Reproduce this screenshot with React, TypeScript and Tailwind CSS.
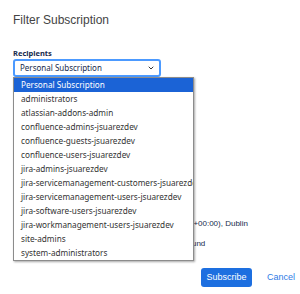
import { ChevronDown } from "lucide-react";

const groups = [
  "Personal Subscription",
  "administrators",
  "atlassian-addons-admin",
  "confluence-admins-jsuarezdev",
  "confluence-guests-jsuarezdev",
  "confluence-users-jsuarezdev",
  "jira-admins-jsuarezdev",
  "jira-servicemanagement-customers-jsuarezdev",
  "jira-servicemanagement-users-jsuarezdev",
  "jira-software-users-jsuarezdev",
  "jira-workmanagement-users-jsuarezdev",
  "site-admins",
  "system-administrators",
];

export default function App() {
  return (
    <div className="w-[300px] h-[294px] bg-white overflow-hidden pl-[13px] pt-[13px] font-['Liberation_Sans',Arial,sans-serif]">
      <h2 className="text-[12px] leading-[14px] text-[#444444]">Filter Subscription</h2>

      <div className="mt-[21px] font-['Noto_Sans',sans-serif]">
        <label className="block text-[7.5px] leading-[10px] font-bold text-[#172b4d]">Recipients</label>
        <div className="relative mt-[1px] w-[148px]">
          <div className="h-[18px] flex items-center justify-between border-2 border-[#4c9aff] rounded-[3px] pl-[5px] pr-[4px] bg-white">
            <span className="text-[8px] text-[#172b4d]">Personal Subscription</span>
            <ChevronDown className="w-[8px] h-[8px] text-[#333333]" strokeWidth={3} />
          </div>

          {/* native select list opened over the form */}
          <ul className="absolute left-0 top-full z-10 w-[181px] bg-white border border-[#8c8c8c] shadow-[1px_1px_2px_rgba(0,0,0,0.35)]">
            {groups.map((g, i) => (
              <li
                key={g}
                className={
                  "h-[14px] flex items-center pl-[7px] text-[8.2px] whitespace-nowrap overflow-hidden " +
                  (i === 0 ? "bg-[#1b63d6] text-white" : "text-[#333333]")
                }
              >
                {g}
              </li>
            ))}
          </ul>
        </div>
      </div>

      <div className="mt-[141px] text-[#172b4d] text-[8px]">
        <div className="flex items-center h-[12px] pl-[103px]">
          <span>Europe/London (GMT+00:00), Dublin</span>
        </div>
        <div className="mt-[8px] flex items-center h-[12px] gap-[4px] pl-[9px]">
          <span className="w-[9px] h-[9px] border border-[#8c8c8c] rounded-[2px]" />
          <span>Email this filter even if there are no issues found</span>
        </div>
      </div>

      <div className="mt-[18px] flex items-center pl-[188px] gap-[15px]">
        <button className="h-[19px] w-[51px] rounded-[3px] bg-[#1d6fe0] text-white text-[9px]">Subscribe</button>
        <button className="text-[9px] text-[#2f7be6]">Cancel</button>
      </div>
    </div>
  );
}
